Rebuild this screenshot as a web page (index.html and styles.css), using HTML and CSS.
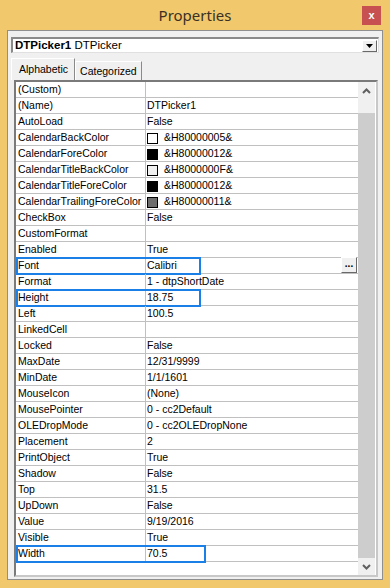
FILE: index.html
```html
<!DOCTYPE html>
<html lang="en">
<head>
    <meta charset="UTF-8">
    <title>Properties</title>
    <link rel="stylesheet" href="styles.css">
</head>
<body>
<div class="window">
    <div class="titlebar">
        <span></span>
        <span class="title">Properties</span>
        <span class="close">x</span>
    </div>

    <div class="client">
        <div class="combo">
            <span class="obj"><b>DTPicker1</b> DTPicker</span>
            <span class="drop">
                <svg width="7" height="4" viewBox="0 0 7 4"><polygon points="0,0 7,0 3.5,4" fill="#000"/></svg>
            </span>
        </div>

        <div class="tabs">
            <span class="tab active">Alphabetic</span>
            <span class="tab">Categorized</span>
        </div>

        <div class="panel">
            <div class="grid">
                <div class="row"><span class="name">(Custom)</span><span class="value"></span></div>
                <div class="row"><span class="name">(Name)</span><span class="value">DTPicker1</span></div>
                <div class="row"><span class="name">AutoLoad</span><span class="value">False</span></div>
                <div class="row"><span class="name">CalendarBackColor</span><span class="value"><i class="swatch white"></i>&amp;H80000005&amp;</span></div>
                <div class="row"><span class="name">CalendarForeColor</span><span class="value"><i class="swatch black"></i>&amp;H80000012&amp;</span></div>
                <div class="row"><span class="name">CalendarTitleBackColor</span><span class="value"><i class="swatch light"></i>&amp;H8000000F&amp;</span></div>
                <div class="row"><span class="name">CalendarTitleForeColor</span><span class="value"><i class="swatch black"></i>&amp;H80000012&amp;</span></div>
                <div class="row"><span class="name">CalendarTrailingForeColor</span><span class="value"><i class="swatch gray"></i>&amp;H80000011&amp;</span></div>
                <div class="row"><span class="name">CheckBox</span><span class="value">False</span></div>
                <div class="row"><span class="name">CustomFormat</span><span class="value"></span></div>
                <div class="row"><span class="name">Enabled</span><span class="value">True</span></div>
                <div class="row mark"><span class="name">Font</span><span class="value">Calibri<span class="dots">...</span></span></div>
                <div class="row"><span class="name">Format</span><span class="value">1 - dtpShortDate</span></div>
                <div class="row mark"><span class="name">Height</span><span class="value">18.75</span></div>
                <div class="row"><span class="name">Left</span><span class="value">100.5</span></div>
                <div class="row"><span class="name">LinkedCell</span><span class="value"></span></div>
                <div class="row"><span class="name">Locked</span><span class="value">False</span></div>
                <div class="row"><span class="name">MaxDate</span><span class="value">12/31/9999</span></div>
                <div class="row"><span class="name">MinDate</span><span class="value">1/1/1601</span></div>
                <div class="row"><span class="name">MouseIcon</span><span class="value">(None)</span></div>
                <div class="row"><span class="name">MousePointer</span><span class="value">0 - cc2Default</span></div>
                <div class="row"><span class="name">OLEDropMode</span><span class="value">0 - cc2OLEDropNone</span></div>
                <div class="row"><span class="name">Placement</span><span class="value">2</span></div>
                <div class="row"><span class="name">PrintObject</span><span class="value">True</span></div>
                <div class="row"><span class="name">Shadow</span><span class="value">False</span></div>
                <div class="row"><span class="name">Top</span><span class="value">31.5</span></div>
                <div class="row"><span class="name">UpDown</span><span class="value">False</span></div>
                <div class="row"><span class="name">Value</span><span class="value">9/19/2016</span></div>
                <div class="row"><span class="name">Visible</span><span class="value">True</span></div>
                <div class="row mark wide"><span class="name">Width</span><span class="value">70.5</span></div>
            </div>

            <div class="scrollbar">
                <span class="arrow">
                    <svg width="9" height="6" viewBox="0 0 9 6"><polyline points="1,5 4.5,1.5 8,5" fill="none" stroke="#606060" stroke-width="2"/></svg>
                </span>
                <span class="gap"></span>
                <span class="thumb"></span>
                <span class="arrow">
                    <svg width="9" height="6" viewBox="0 0 9 6"><polyline points="1,1 4.5,4.5 8,1" fill="none" stroke="#606060" stroke-width="2"/></svg>
                </span>
            </div>
        </div>
    </div>
</div>
</body>
</html>
```

FILE: styles.css
```css
body {
    margin: 0;
    padding: 0;
    background-color: #f1c86c;
    font-family: 'Liberation Sans', Arial, sans-serif;
    color: #000;
}

.window {
    width: 390px;
    height: 588px;
    display: flex;
    flex-direction: column;
}

/* barra de titulo */
.titlebar {
    height: 30px;
    display: grid;
    grid-template-columns: 1fr auto 1fr;
    align-items: center;
}

.title {
    font-family: 'Noto Sans', 'Open Sans', sans-serif;
    font-size: 15px;
    color: #3a3024;
    margin-bottom: 1px;
}

.close {
    justify-self: end;
    margin-right: 9px;
    width: 19px;
    height: 19px;
    background-color: #c75050;
    color: white;
    font-weight: bold;
    font-size: 11px;
    display: flex;
    align-items: center;
    justify-content: center;
}

.client {
    flex: 1;
    margin: 0 7px 8px 7px;
    border: 1px solid #8f8f8f;
    background-color: #f0f0f0;
    font-size: 11px;
}

/* combo del objeto */
.combo {
    margin: 6px 3px 0 3px;
    height: 16px;
    box-sizing: border-box;
    background-color: white;
    border-top: 2px solid #8a8a8a;
    border-left: 2px solid #8a8a8a;
    border-right: 1px solid #e0e0e0;
    border-bottom: 1px solid #e0e0e0;
    display: flex;
    align-items: center;
    justify-content: space-between;
}

.combo .obj {
    padding-left: 2px;
    font-size: 11.5px;
    line-height: 13px;
}

.drop {
    width: 15px;
    height: 12px;
    margin-right: 1px;
    box-sizing: border-box;
    background-color: #f0f0f0;
    border-top: 1px solid #fff;
    border-left: 1px solid #fff;
    border-right: 1px solid #696969;
    border-bottom: 1px solid #696969;
    display: flex;
    align-items: center;
    justify-content: center;
}

/* pestañas */
.tabs {
    display: flex;
    align-items: flex-end;
    margin: 4px 0 0 3px;
    height: 23px;
}

.tab {
    height: 19px;
    box-sizing: border-box;
    padding: 3px 4px 0 4px;
    border-top: 1px solid #fff;
    border-left: 1px solid #fff;
    border-right: 1px solid #8a8a8a;
    font-size: 10.5px;
}

.tab.active {
    height: 22px;
    padding: 4px 6px 0 7px;
}

/* rejilla */
.panel {
    margin-left: 6px;
    width: 364px;
    height: 497px;
    box-sizing: border-box;
    border-top: 2px solid #7a7a7a;
    border-left: 2px solid #7a7a7a;
    border-right: 2px solid #c8c8c8;
    border-bottom: 2px solid #c8c8c8;
    background-color: white;
    display: flex;
}

.grid {
    width: 342px;
}

.row {
    display: grid;
    grid-template-columns: 130px 212px;
    height: 16px;
    box-sizing: border-box;
    border-bottom: 1px solid #c0c0c0;
    font-size: 10.5px;
    line-height: 15px;
    position: relative;
}

.name {
    padding-left: 2px;
    border-right: 1px solid #c0c0c0;
    white-space: nowrap;
    overflow: hidden;
}

.value {
    padding-left: 1px;
    white-space: nowrap;
    display: flex;
    align-items: center;
    position: relative;
}

.swatch {
    display: inline-block;
    width: 11px;
    height: 11px;
    box-sizing: border-box;
    border: 1px solid #000;
    margin-right: 6px;
    margin-top: 1px;
}

.swatch.white { background-color: #fff; }
.swatch.black { background-color: #000; }
.swatch.light { background-color: #f0f0f0; }
.swatch.gray { background-color: #6d6d6d; }

.dots {
    position: absolute;
    right: 1px;
    top: -1px;
    width: 16px;
    height: 16px;
    box-sizing: border-box;
    background-color: #f0f0f0;
    border-top: 1px solid #fff;
    border-left: 1px solid #fff;
    border-right: 1px solid #696969;
    border-bottom: 1px solid #696969;
    font-weight: bold;
    font-size: 10px;
    line-height: 11px;
    text-align: center;
}

/* recuadros azules */
.row.mark::after {
    content: "";
    position: absolute;
    left: 0;
    top: -1px;
    width: 185px;
    height: 18px;
    box-sizing: border-box;
    border: 2px solid #1a7fe6;
}

.row.mark.wide::after {
    width: 190px;
}

.scrollbar {
    width: 17px;
    background-color: #f0f0f0;
    display: flex;
    flex-direction: column;
}

.arrow {
    height: 17px;
    display: flex;
    align-items: center;
    justify-content: center;
}

.gap {
    height: 14px;
}

.thumb {
    flex: 1;
    background-color: #cdcdcd;
}
```
